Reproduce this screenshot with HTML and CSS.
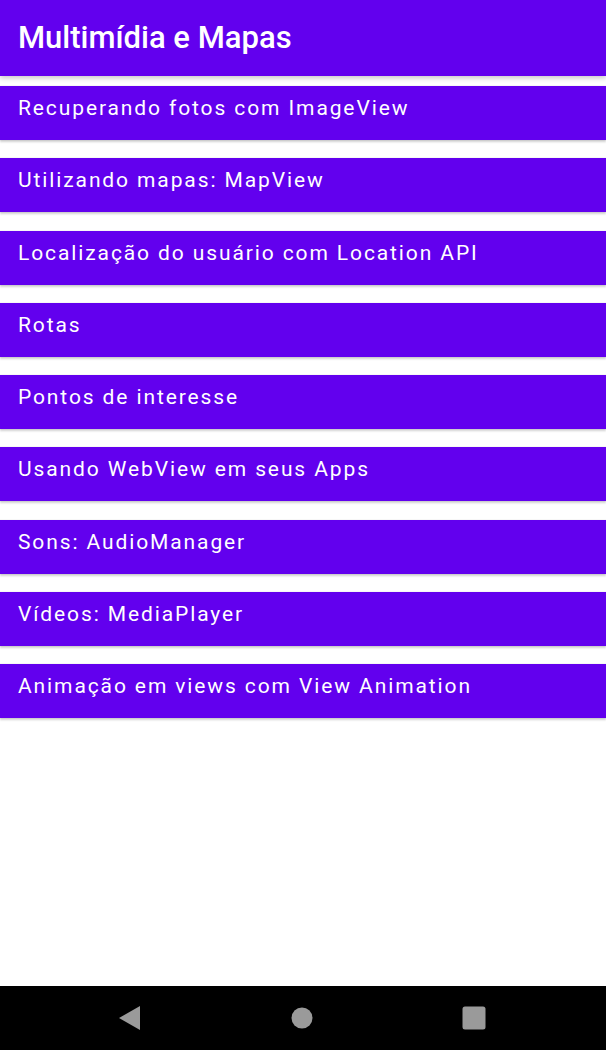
FILE: index.html
```html
<!DOCTYPE html>
<html lang="pt">
<head>
<meta charset="utf-8">
<link rel="stylesheet" href="styles.css">
</head>
<body>
<div class="screen">
  <header class="appbar"><h1 class="title">Multimídia e Mapas</h1></header>
  <main class="list">
    <div class="btn">Recuperando fotos com ImageView</div>
    <div class="btn">Utilizando mapas: MapView</div>
    <div class="btn">Localização do usuário com Location API</div>
    <div class="btn">Rotas</div>
    <div class="btn">Pontos de interesse</div>
    <div class="btn">Usando WebView em seus Apps</div>
    <div class="btn">Sons: AudioManager</div>
    <div class="btn">Vídeos: MediaPlayer</div>
    <div class="btn">Animação em views com View Animation</div>
  </main>
  <nav class="navbar">
    <svg class="nav-ico" width="24" height="26" viewBox="0 0 24 26"><polygon points="22,1 22,25 1,13" fill="#9a9a9a"/></svg>
    <svg class="nav-ico" width="22" height="22" viewBox="0 0 22 22"><circle cx="11" cy="11" r="10.5" fill="#9a9a9a"/></svg>
    <svg class="nav-ico" width="24" height="24" viewBox="0 0 24 24"><rect x="0.5" y="0.5" width="23" height="23" rx="2.5" fill="#9a9a9a"/></svg>
  </nav>
</div>
</body>
</html>
```
FILE: styles.css
```css
html, body {
  margin: 0;
  padding: 0;
  background: #ffffff;
}
.screen {
  width: 606px;
  height: 1050px;
  display: flex;
  flex-direction: column;
  font-family: Roboto, "Noto Sans", sans-serif;
  overflow: hidden;
}
.appbar {
  height: 76px;
  background: #6200ee;
  display: flex;
  align-items: center;
  padding-left: 18px;
  box-shadow: 0 2px 5px rgba(0,0,0,0.22);
  position: relative;
  z-index: 1;
  flex: none;
}
.title {
  margin: 0;
  color: #ffffff;
  font-size: 31px;
  font-weight: 500;
  line-height: 1;
  padding-bottom: 2px;
}
.list {
  flex: 1;
  display: flex;
  flex-direction: column;
  gap: 18.25px;
  padding-top: 10px;
}
.btn {
  height: 54px;
  flex: none;
  background: #6200ee;
  color: #ffffff;
  font-size: 21px;
  font-weight: 400;
  letter-spacing: 0.09em;
  padding: 10px 18px 0;
  box-sizing: border-box;
  line-height: 24px;
  box-shadow: 0 2px 2px rgba(0,0,0,0.18), 0 0 1px rgba(0,0,0,0.2);
}
.navbar {
  height: 64px;
  background: #000000;
  flex: none;
  display: flex;
  align-items: center;
  justify-content: space-between;
  padding: 0 120px 0 118px;
}
.nav-ico {
  display: block;
}
```
